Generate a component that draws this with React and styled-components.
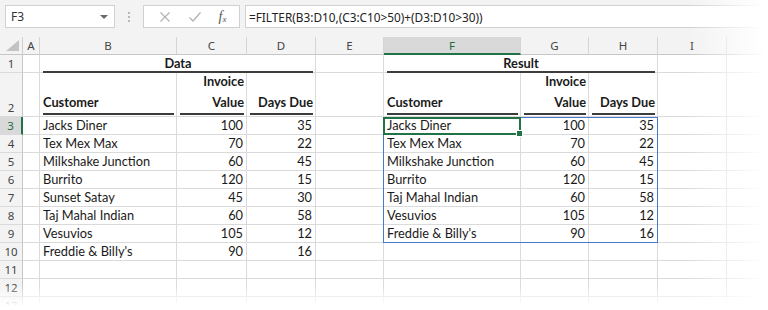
import React from 'react'
import styled, { createGlobalStyle } from 'styled-components'

const GlobalStyle = createGlobalStyle`
  html, body {
    margin: 0;
    padding: 0;
    background: #ffffff;
  }
  body {
    width: 768px;
    height: 310px;
    overflow: hidden;
  }
`

const LETTERS = ['A', 'B', 'C', 'D', 'E', 'F', 'G', 'H', 'I', 'J']

const source = [
  ['Jacks Diner', 100, 35],
  ['Tex Mex Max', 70, 22],
  ['Milkshake Junction', 60, 45],
  ['Burrito', 120, 15],
  ['Sunset Satay', 45, 30],
  ['Taj Mahal Indian', 60, 58],
  ['Vesuvios', 105, 12],
  ["Freddie & Billy's", 90, 16],
]

const result = source.filter(r => r[1] > 50 || r[2] > 30)

const App = () => {
  const cells = []

  for (let r = 1; r <= 13; r++) {
    for (let c = 0; c < LETTERS.length; c++) {
      const col = LETTERS[c]
      const key = col + r
      const gr = r + 1
      const gc = c + 2

      if (r === 1 && (col === 'C' || col === 'D' || col === 'G' || col === 'H')) continue

      if (r === 1 && (col === 'B' || col === 'F')) {
        cells.push(
          <Cell key={key} $row={gr} $col={gc} $span={3}>
            <Title>{col === 'B' ? 'Data' : 'Result'}</Title>
          </Cell>
        )
        continue
      }

      if (r === 2 && 'BCDFGH'.includes(col)) {
        const label = col === 'B' || col === 'F' ? ['Customer'] : col === 'C' || col === 'G' ? ['Invoice', 'Value'] : ['Days Due']
        cells.push(
          <Cell key={key} $row={gr} $col={gc}>
            <HeadLabel $right={col !== 'B' && col !== 'F'}>
              {label.map(l => <div key={l}>{l}</div>)}
            </HeadLabel>
          </Cell>
        )
        continue
      }

      let text = ''
      let right = false
      if (r >= 3 && r <= 10 && 'BCD'.includes(col)) {
        const row = source[r - 3]
        text = row['BCD'.indexOf(col)]
        right = col !== 'B'
      }
      if (r >= 3 && r - 3 < result.length && 'FGH'.includes(col)) {
        const row = result[r - 3]
        text = row['FGH'.indexOf(col)]
        right = col !== 'F'
      }
      cells.push(
        <Cell key={key} $row={gr} $col={gc}>
          <Value $right={right}>{text}</Value>
        </Cell>
      )
    }
  }

  // spill range covers F3 down to the last result row
  const spillEnd = 4 + result.length

  return (
    <Page>
      <GlobalStyle />
      <Bar>
        <NameBox>
          <span>F3</span>
          <Caret />
        </NameBox>
        <Grip>
          <i /><i /><i />
        </Grip>
        <FxBox>
          <svg width="12" height="12" viewBox="0 0 12 12">
            <path d="M1.5 1.5 L10.5 10.5 M10.5 1.5 L1.5 10.5" stroke="#b3b3b3" strokeWidth="1.3" fill="none" />
          </svg>
          <svg width="14" height="12" viewBox="0 0 14 12">
            <path d="M1.5 6.5 L5 10 L12.5 1.5" stroke="#b3b3b3" strokeWidth="1.3" fill="none" />
          </svg>
          <Fx>f<sub>x</sub></Fx>
        </FxBox>
        <Formula>=FILTER(B3:D10,(C3:C10&gt;50)+(D3:D10&gt;30))</Formula>
      </Bar>

      <Sheet>
        <Corner>
          <svg width="15" height="13" viewBox="0 0 15 13">
            <polygon points="1,12 14,12 14,1" fill="#c3c3c3" />
          </svg>
        </Corner>
        {LETTERS.map((l, i) => (
          <ColHead key={l} $col={i + 2} $active={l === 'F'}>{l}</ColHead>
        ))}
        {Array.from({ length: 13 }, (_, i) => (
          <RowHead key={i} $row={i + 2} $active={i + 1 === 3}>{i + 1}</RowHead>
        ))}
        {cells}
        <Spill style={{ gridRowEnd: spillEnd }} />
        <Selection>
          <Handle />
        </Selection>
      </Sheet>

      <FadeRight />
      <FadeBottom />
    </Page>
  )
}

export default App

const Page = styled.div`
  position: relative;
  width: 768px;
  height: 310px;
  overflow: hidden;
  background: #f3f3f3;
  font-family: Lato, "Liberation Sans", sans-serif;
`

const Bar = styled.div`
  height: 37px;
  box-sizing: border-box;
  padding: 5px 0 0 5px;
  display: flex;
  align-items: flex-start;
`

const NameBox = styled.div`
  width: 110px;
  height: 23px;
  box-sizing: border-box;
  background: #ffffff;
  border: 1px solid #d0d0d0;
  display: flex;
  align-items: center;
  justify-content: space-between;
  padding: 0 6px 0 5px;
  font-family: "Noto Sans", sans-serif;
  font-size: 12px;
  color: #333;
`

const Caret = styled.span`
  width: 0;
  height: 0;
  border-left: 4px solid transparent;
  border-right: 4px solid transparent;
  border-top: 4px solid #6a6a6a;
`

const Grip = styled.div`
  width: 28px;
  height: 23px;
  display: flex;
  flex-direction: column;
  align-items: center;
  justify-content: center;
  gap: 2px;

  i {
    width: 2px;
    height: 2px;
    background: #b8b8b8;
  }
`

const FxBox = styled.div`
  width: 97px;
  height: 23px;
  box-sizing: border-box;
  background: #ffffff;
  border: 1px solid #d0d0d0;
  display: flex;
  align-items: center;
  justify-content: space-around;
  padding: 0 4px 0 6px;
`

const Fx = styled.span`
  font-family: "Liberation Serif", serif;
  font-style: italic;
  font-size: 14px;
  color: #555;
  line-height: 1;

  sub {
    font-size: 9px;
    vertical-align: -1px;
  }
`

const Formula = styled.div`
  flex: 1;
  margin-left: 5px;
  height: 23px;
  box-sizing: border-box;
  background: #ffffff;
  border: 1px solid #d0d0d0;
  border-right: none;
  padding-left: 3px;
  display: flex;
  align-items: center;
  font-family: "Noto Sans", sans-serif;
  font-size: 11.8px;
  color: #222;
  white-space: nowrap;
`

const Sheet = styled.div`
  display: grid;
  grid-template-columns: 23px 17px 137px 70px 69px 68px 137px 68px 69px 69px 120px;
  grid-template-rows: 18px 18px 44px repeat(11, 18px);
  background: #ffffff;
`

const Corner = styled.div`
  grid-row: 1;
  grid-column: 1;
  background: #f3f3f3;
  border-right: 1px solid #d0d0d0;
  border-bottom: 1px solid #c6c6c6;
  display: flex;
  align-items: flex-end;
  justify-content: flex-end;
  padding: 0 2px 2px 0;
  box-sizing: border-box;
`

const ColHead = styled.div`
  grid-row: 1;
  grid-column: ${p => p.$col};
  box-sizing: border-box;
  background: ${p => (p.$active ? '#d9d9d9' : '#f3f3f3')};
  border-right: 1px solid #d5d5d5;
  border-bottom: ${p => (p.$active ? '2px solid #217346' : '1px solid #c6c6c6')};
  color: ${p => (p.$active ? '#1e6b41' : '#444')};
  font-family: "Noto Sans", sans-serif;
  font-size: 11.5px;
  display: flex;
  align-items: center;
  justify-content: center;
  padding-top: ${p => (p.$active ? '1px' : '0')};
`

const RowHead = styled.div`
  grid-row: ${p => p.$row};
  grid-column: 1;
  box-sizing: border-box;
  background: ${p => (p.$active ? '#d9d9d9' : '#f3f3f3')};
  border-right: ${p => (p.$active ? '2px solid #217346' : '1px solid #c6c6c6')};
  border-bottom: 1px solid #dadada;
  color: ${p => (p.$active ? '#1e6b41' : '#444')};
  font-family: "Noto Sans", sans-serif;
  font-size: 11.5px;
  display: flex;
  align-items: ${p => (p.$row === 3 ? 'flex-end' : 'center')};
  justify-content: center;
  padding-bottom: ${p => (p.$row === 3 ? '1px' : '0')};
`

const Cell = styled.div`
  grid-row: ${p => p.$row};
  grid-column: ${p => p.$col} / span ${p => p.$span || 1};
  box-sizing: border-box;
  border-right: 1px solid #dadada;
  border-bottom: 1px solid #dadada;
  display: flex;
  flex-direction: column;
  justify-content: flex-end;
  min-width: 0;
  font-size: 12.8px;
  color: #1a1a1a;
`

const Title = styled.div`
  margin: 0 2px -1px 3px;
  border-bottom: 2px solid #3c3c3c;
  text-align: center;
  font-weight: 700;
  line-height: 16px;
`

const HeadLabel = styled.div`
  margin: 0 2px 1px 3px;
  border-bottom: 2px solid #3c3c3c;
  text-align: ${p => (p.$right ? 'right' : 'left')};
  font-weight: 700;
  line-height: 21px;
`

const Value = styled.div`
  text-align: ${p => (p.$right ? 'right' : 'left')};
  padding: 0 3px;
  line-height: 17px;
  white-space: nowrap;
`

const Spill = styled.div`
  grid-row: 4 / 11;
  grid-column: 7 / 10;
  margin: 0 0 0 -1px;
  border: 1px solid #4a78d0;
  pointer-events: none;
`

const Selection = styled.div`
  grid-row: 4;
  grid-column: 7;
  margin: 0 0 0 -1px;
  border: 2px solid #217346;
  position: relative;
  pointer-events: none;
`

const Handle = styled.span`
  position: absolute;
  right: -4px;
  bottom: -4px;
  width: 5px;
  height: 5px;
  background: #217346;
  border: 1px solid #ffffff;
`

const FadeRight = styled.div`
  position: absolute;
  top: 0;
  right: 0;
  width: 80px;
  height: 100%;
  background: linear-gradient(to right, rgba(255, 255, 255, 0), #ffffff 95%);
  pointer-events: none;
`

const FadeBottom = styled.div`
  position: absolute;
  left: 0;
  bottom: 0;
  width: 100%;
  height: 26px;
  background: linear-gradient(to bottom, rgba(255, 255, 255, 0), #ffffff 85%);
  pointer-events: none;
`
